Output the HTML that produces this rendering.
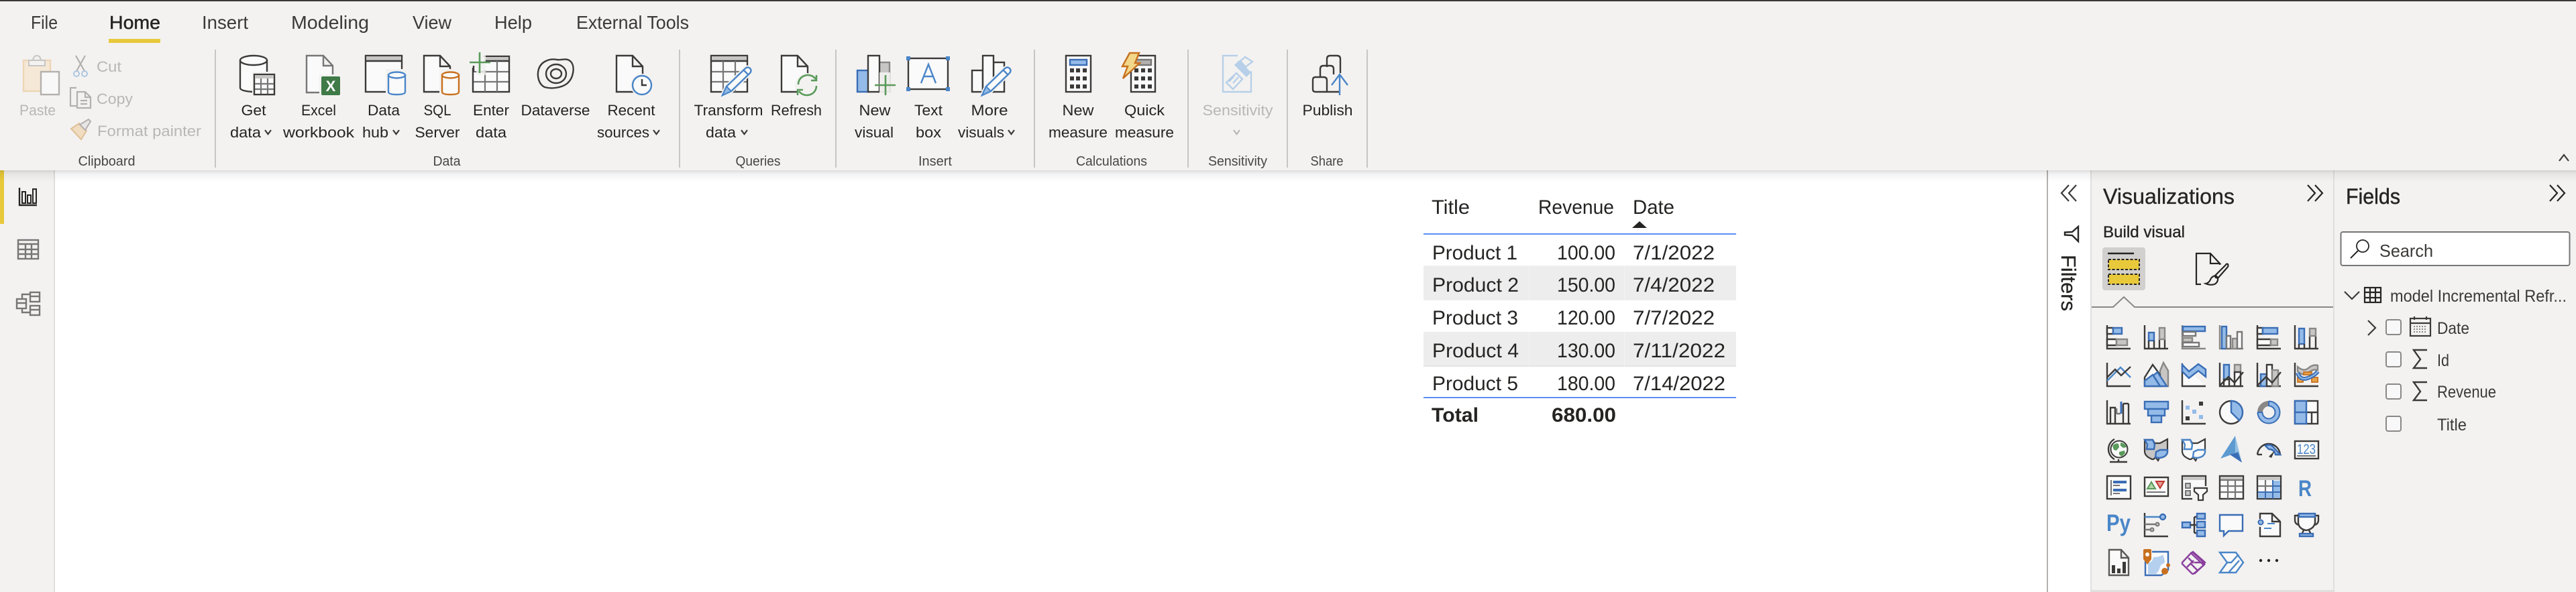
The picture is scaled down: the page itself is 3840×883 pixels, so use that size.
<!DOCTYPE html>
<html lang="en"><head><meta charset="utf-8"><title>Power BI Desktop</title>
<style>
html,body{margin:0;padding:0;background:#fff;width:3840px;height:883px;overflow:hidden}
svg{display:block;position:absolute;left:0;top:0}
text{font-family:"Liberation Sans",sans-serif;fill:#252423}
.t{font-size:28px}
.r{font-size:22.500px;text-anchor:middle}
.rs{font-size:22.500px}
.dis{fill:#b9b7b5}
.gl{font-size:20.500px;text-anchor:middle;fill:#484644}
.tb{font-size:30px}
.ra{text-anchor:end}
.k{fill:none;stroke:#3b3a39;stroke-width:2.4}
.w{fill:#fafafa;stroke:#3b3a39;stroke-width:2.4}
.w2{fill:#fafafa;stroke:#767676;stroke-width:2.4}
.ln{fill:none;stroke:#767676;stroke-width:2.2}
.b{fill:#94bbe8;stroke:#3a6db5;stroke-width:2.4}
.bl{fill:#fafafa;stroke:#4a86c8;stroke-width:2.4}
.bo{fill:none;stroke:#4a86c8;stroke-width:2.4}
.g{fill:#c8c6c4;stroke:#8a8886;stroke-width:2.4}
.hd{fill:#c8c6c4}
.sep{stroke:#c8c6c4;stroke-width:2}
.gr{fill:none;stroke:#5a9a5a;stroke-width:2.6}
.or{fill:#fafafa;stroke:#c8701e;stroke-width:2.4}
.ch{fill:none;stroke:#3b3a39;stroke-width:2.2}
.dk{fill:#3b3a39}
.pu{fill:none;stroke:#8a3f9d;stroke-width:2.4}
.ds{fill:none;stroke:#b7cfe8;stroke-width:2.4}
.dg{fill:none;stroke:#b3b0ad;stroke-width:2.2}
.cb{fill:#f8f8f8;stroke:#8a8886;stroke-width:2}
.nv{fill:none;stroke:#767676;stroke-width:2.4}
.fl{font-size:25px;fill:#3b3a39}
</style></head><body>
<svg xmlns="http://www.w3.org/2000/svg" width="3840" height="883" viewBox="0 0 3840 883">
<defs>
<linearGradient id="sh" x1="0" y1="0" x2="0" y2="1"><stop offset="0" stop-color="#000" stop-opacity=".13"/><stop offset=".3" stop-color="#000" stop-opacity=".05"/><stop offset="1" stop-color="#000" stop-opacity="0"/></linearGradient>
</defs>
<!-- panes -->
<rect width="3840" height="883" fill="#fff"/>
<rect x="0" y="254" width="81" height="629" fill="#f3f2f1"/>
<rect x="80" y="254" width="2" height="629" fill="#e1dfdd"/>
<rect x="0" y="254" width="6" height="80" fill="#e8c93b"/>
<rect x="3051" y="254" width="2" height="629" fill="#b3b0ad"/>
<rect x="3118" y="254" width="722" height="629" fill="#f3f2f1"/>
<rect x="3116" y="254" width="2" height="629" fill="#e1dfdd"/>
<rect x="3478" y="254" width="2" height="629" fill="#e1dfdd"/>
<rect x="3118" y="880" width="360" height="3" fill="#e1dfdd"/>
<!-- ribbon -->
<rect x="0" y="254" width="3840" height="18" fill="url(#sh)"/>
<rect width="3840" height="254" fill="#f3f2f1"/>
<rect width="3840" height="2" fill="#3b3a39"/>
<text class="t" x="46" y="43" textLength="40" lengthAdjust="spacingAndGlyphs" style="fill:#3b3a39">File</text>
<text class="t" x="163" y="43" textLength="76" lengthAdjust="spacingAndGlyphs" stroke="#252423" stroke-width=".5">Home</text>
<rect x="162" y="58" width="77" height="6" fill="#e8c93b"/>
<text class="t" x="301" y="43" textLength="69" lengthAdjust="spacingAndGlyphs" style="fill:#3b3a39">Insert</text>
<text class="t" x="434" y="43" textLength="116" lengthAdjust="spacingAndGlyphs" style="fill:#3b3a39">Modeling</text>
<text class="t" x="615" y="43" textLength="58" lengthAdjust="spacingAndGlyphs" style="fill:#3b3a39">View</text>
<text class="t" x="737" y="43" textLength="56" lengthAdjust="spacingAndGlyphs" style="fill:#3b3a39">Help</text>
<text class="t" x="859" y="43" textLength="168" lengthAdjust="spacingAndGlyphs" style="fill:#3b3a39">External Tools</text>
<g>
<line class="sep" x1="321" y1="74" x2="321" y2="250"/><line class="sep" x1="1013" y1="74" x2="1013" y2="250"/><line class="sep" x1="1246" y1="74" x2="1246" y2="250"/><line class="sep" x1="1542" y1="74" x2="1542" y2="250"/><line class="sep" x1="1771" y1="74" x2="1771" y2="250"/><line class="sep" x1="1919" y1="74" x2="1919" y2="250"/><line class="sep" x1="2038" y1="74" x2="2038" y2="250"/>
</g>
<!-- ribbon labels -->
<text class="r dis" x="56" y="172" textLength="54" lengthAdjust="spacingAndGlyphs">Paste</text>
<text class="rs dis" x="144" y="107" textLength="37" lengthAdjust="spacingAndGlyphs">Cut</text><text class="rs dis" x="144" y="155" textLength="54" lengthAdjust="spacingAndGlyphs">Copy</text><text class="rs dis" x="145" y="203" textLength="155" lengthAdjust="spacingAndGlyphs">Format painter</text>
<text class="r" x="378" y="172" textLength="37" lengthAdjust="spacingAndGlyphs">Get</text><text class="rs" x="343" y="205" textLength="46" lengthAdjust="spacingAndGlyphs">data</text><path class="ch" d="M395 194l4.500 6 4.500-6"/>
<text class="r" x="475" y="172" textLength="52" lengthAdjust="spacingAndGlyphs">Excel</text><text class="r" x="475" y="205" textLength="106" lengthAdjust="spacingAndGlyphs">workbook</text>
<text class="r" x="572" y="172" textLength="48" lengthAdjust="spacingAndGlyphs">Data</text><text class="rs" x="540" y="205" textLength="39" lengthAdjust="spacingAndGlyphs">hub</text><path class="ch" d="M586 194l4.500 6 4.500-6"/>
<text class="r" x="652" y="172" textLength="41" lengthAdjust="spacingAndGlyphs">SQL</text><text class="r" x="652" y="205" textLength="67" lengthAdjust="spacingAndGlyphs">Server</text>
<text class="r" x="732" y="172" textLength="54" lengthAdjust="spacingAndGlyphs">Enter</text><text class="r" x="732" y="205" textLength="46" lengthAdjust="spacingAndGlyphs">data</text>
<text class="r" x="828" y="172" textLength="103" lengthAdjust="spacingAndGlyphs">Dataverse</text>
<text class="r" x="941" y="172" textLength="71" lengthAdjust="spacingAndGlyphs">Recent</text><text class="rs" x="890" y="205" textLength="78" lengthAdjust="spacingAndGlyphs">sources</text><path class="ch" d="M974 194l4.500 6 4.500-6"/>
<text class="r" x="1086" y="172" textLength="103" lengthAdjust="spacingAndGlyphs">Transform</text><text class="rs" x="1052" y="205" textLength="45" lengthAdjust="spacingAndGlyphs">data</text><path class="ch" d="M1105 194l4.500 6 4.500-6"/>
<text class="r" x="1187" y="172" textLength="76" lengthAdjust="spacingAndGlyphs">Refresh</text>
<text class="r" x="1304" y="172" textLength="47" lengthAdjust="spacingAndGlyphs">New</text><text class="r" x="1303" y="205" textLength="58" lengthAdjust="spacingAndGlyphs">visual</text>
<text class="r" x="1384" y="172" textLength="42" lengthAdjust="spacingAndGlyphs">Text</text><text class="r" x="1384" y="205" textLength="38" lengthAdjust="spacingAndGlyphs">box</text>
<text class="r" x="1475" y="172" textLength="55" lengthAdjust="spacingAndGlyphs">More</text><text class="rs" x="1428" y="205" textLength="69" lengthAdjust="spacingAndGlyphs">visuals</text><path class="ch" d="M1503 194l4.500 6 4.500-6"/>
<text class="r" x="1607" y="172" textLength="47" lengthAdjust="spacingAndGlyphs">New</text><text class="r" x="1607" y="205" textLength="88" lengthAdjust="spacingAndGlyphs">measure</text>
<text class="r" x="1706" y="172" textLength="60" lengthAdjust="spacingAndGlyphs">Quick</text><text class="r" x="1706" y="205" textLength="88" lengthAdjust="spacingAndGlyphs">measure</text>
<text class="r dis" x="1845" y="172" textLength="105" lengthAdjust="spacingAndGlyphs">Sensitivity</text><path fill="none" stroke="#b9b7b5" stroke-width="2.2" d="M1839 194l4.500 6 4.500-6"/>
<text class="r" x="1979" y="172" textLength="75" lengthAdjust="spacingAndGlyphs">Publish</text>
<text class="gl" x="159" y="247" textLength="85" lengthAdjust="spacingAndGlyphs">Clipboard</text><text class="gl" x="666" y="247" textLength="41" lengthAdjust="spacingAndGlyphs">Data</text><text class="gl" x="1130" y="247" textLength="67" lengthAdjust="spacingAndGlyphs">Queries</text><text class="gl" x="1394" y="247" textLength="50" lengthAdjust="spacingAndGlyphs">Insert</text><text class="gl" x="1657" y="247" textLength="106" lengthAdjust="spacingAndGlyphs">Calculations</text><text class="gl" x="1845" y="247" textLength="88" lengthAdjust="spacingAndGlyphs">Sensitivity</text><text class="gl" x="1978" y="247" textLength="49" lengthAdjust="spacingAndGlyphs">Share</text>
<path d="M3815 240l7-9 7 9" fill="none" stroke="#3b3a39" stroke-width="2.2"/>

<!-- Paste -->
<rect x="35" y="90" width="40" height="46" fill="#f5e8d6" stroke="#eed5b5" stroke-width="2.4"/><rect x="43" y="90" width="24" height="8" fill="#f3f2f1" stroke="#c8c6c4" stroke-width="2"/><path d="M49 90q1-7 6-7t6 7" fill="none" stroke="#c8c6c4" stroke-width="2"/>
<rect x="61" y="107" width="27" height="34" fill="#f8f8f8" stroke="#b3b0ad" stroke-width="2.4"/>
<!-- Cut -->
<path class="dg" d="M113 83l13 23M127 83l-13 23"/><circle cx="114" cy="110" r="4" fill="none" stroke="#aec6e0" stroke-width="2"/><circle cx="126" cy="110" r="4" fill="none" stroke="#aec6e0" stroke-width="2"/>
<!-- Copy -->
<path class="dg" d="M114 131h-9v27h10M115 137h12l8 8v16h-20zM127 137v8h8M120 150h10M120 155h10"/>
<!-- Format painter -->
<path d="M106 192l12-8 11 11-8 13z" fill="#f0dcc0" stroke="#e0bf96" stroke-width="2"/><path d="M119 186l13-8 3 3-8 13z" fill="#e8e6e4" stroke="#b3b0ad" stroke-width="2"/>
<!-- Get data -->
<path class="w" d="M358 90V131q0 5 20 6h20V90z"/><ellipse class="w" cx="378" cy="90" rx="20" ry="7"/>
<rect x="376" y="107" width="36" height="37" fill="#f3f2f1"/><rect x="379" y="111" width="30" height="30" class="w"/><rect x="380" y="112" width="28" height="5" class="hd"/><path class="ln" d="M389 117v23M399 117v23M380 125h28M380 133h28" stroke-width="1.800"/>
<!-- Excel -->
<path class="w2" d="M457 83h25l14 15v40h-39zM482 83v15h14"/><rect x="476" y="111" width="34" height="34" fill="#f3f2f1"/><rect x="479" y="114" width="28" height="28" rx="2" fill="#3f7a47"/><text x="493" y="136" text-anchor="middle" font-size="22" font-weight="bold" style="fill:#fff">X</text>
<!-- Data hub -->
<rect class="w" x="545" y="83" width="54" height="54"/><rect x="546" y="84" width="52" height="7" class="hd"/><path class="k" d="M546 91h52"/><rect x="575" y="103" width="32" height="40" fill="#f3f2f1"/>
<path class="bl" d="M579 112v25q0 4 12.500 4t12.500-4v-25z"/><ellipse class="bl" cx="591.500" cy="112" rx="12.500" ry="4.500"/>
<!-- SQL -->
<path class="w" d="M632 83h24l15 16v38h-39zM656 83v16h15"/><rect x="655" y="103" width="32" height="40" fill="#f3f2f1"/>
<path class="or" d="M659 112v25q0 4 12.500 4t12.500-4v-25z"/><ellipse class="or" cx="671.500" cy="112" rx="12.500" ry="4.500"/>
<!-- Enter data -->
<rect class="w" x="705" y="84" width="54" height="53"/><rect x="722" y="85" width="36" height="6" class="hd"/><path class="k" d="M722 91h36"/><path class="ln" d="M723 104v33M741 91v46M706 107h52M706 122h52"/><rect x="697" y="82" width="24" height="19" fill="#f3f2f1"/><path class="k" d="M706 98v9"/><rect x="710" y="78" width="14" height="34" fill="#f3f2f1" opacity=".8"/><path class="gr" d="M700 93h31M715 78v31"/>
<!-- Dataverse -->
<path class="k" stroke-width="3" d="M812 130C803 126 800 113 803 103 807 91 820 87 830 89 838 90 844 86 850 91 858 98 855 116 846 124 838 131 822 133 812 130Z"/><ellipse class="k" cx="829" cy="110" rx="15" ry="14"/><ellipse class="k" cx="829" cy="110" rx="8" ry="7"/>
<!-- Recent -->
<path class="w" d="M919 83h24l15 16v38h-39zM943 83v16h15"/><circle cx="957" cy="127" r="17" fill="#f3f2f1"/><circle cx="957" cy="127" r="14" class="bl" stroke-width="2.800"/><path class="k" d="M957 118v9h7"/>
<!-- Transform -->
<rect class="w" x="1060" y="83" width="54" height="54"/><rect x="1061" y="84" width="52" height="7" class="hd"/><path class="k" d="M1061 91h52"/><path class="ln" d="M1078 91v46M1096 91v46M1061 107h52M1061 122h52"/>
<path fill="#f3f2f1" stroke="#f3f2f1" stroke-width="6" d="M1077 142l6-13 28-27q4-3 7 0t0 7l-28 27z"/>
<path class="bl" d="M1077 142l6-13 28-27q4-3 7 0t0 7l-28 27z"/><path fill="#94bbe8" stroke="#4a86c8" stroke-width="2" d="M1077 142l6-13 7 7z"/><path class="bo" d="M1108 104l7 7"/>
<!-- Refresh -->
<path class="w" d="M1165 83h24l15 16v38h-39zM1189 83v16h15"/><circle cx="1203" cy="127" r="18" fill="#f3f2f1"/><path class="gr" d="M1190 126c0-14 18-19 26-8M1217 128c0 14-18 19-26 8M1217 112v8h-8M1189 142v-8h8"/>
<!-- New visual -->
<rect class="b" x="1278" y="105" width="17" height="32"/><rect class="g" x="1310" y="93" width="16" height="44"/><rect class="w" x="1294" y="83" width="17" height="54"/><rect x="1311" y="108" width="16" height="36" fill="#f3f2f1" opacity=".9"/><path class="gr" d="M1304 127h31M1320 112v30"/>
<!-- Text box -->
<rect class="w" x="1354" y="87" width="59" height="46"/><rect x="1351" y="84" width="6" height="6" fill="#4a86c8"/><rect x="1410" y="84" width="6" height="6" fill="#4a86c8"/><rect x="1351" y="130" width="6" height="6" fill="#4a86c8"/><rect x="1410" y="130" width="6" height="6" fill="#4a86c8"/><path class="bo" d="M1373 124l11-28 11 28M1377 114h14"/>
<!-- More visuals -->
<rect class="w" x="1449" y="105" width="16" height="32"/><rect class="w" x="1481" y="93" width="16" height="44"/><rect class="w" x="1465" y="83" width="16" height="54"/>
<path fill="#f3f2f1" stroke="#f3f2f1" stroke-width="6" d="M1464 142l6-13 28-27q4-3 7 0t0 7l-28 27z"/><path class="bl" d="M1464 142l6-13 28-27q4-3 7 0t0 7l-28 27z"/><path fill="#94bbe8" stroke="#4a86c8" stroke-width="2" d="M1464 142l6-13 7 7z"/><path class="bo" d="M1495 104l7 7"/>
<!-- New measure -->
<rect class="w" x="1589" y="83" width="37" height="54"/><rect class="b" x="1595" y="89" width="25" height="8"/>
<g class="dk"><rect x="1595" y="102" width="6" height="6"/><rect x="1604" y="102" width="6" height="6"/><rect x="1614" y="102" width="6" height="6"/><rect x="1595" y="114" width="6" height="6"/><rect x="1604" y="114" width="6" height="6"/><rect x="1614" y="114" width="6" height="6"/><rect x="1595" y="126" width="6" height="6"/><rect x="1604" y="126" width="6" height="6"/><rect x="1614" y="126" width="6" height="6"/></g>
<!-- Quick measure -->
<rect class="w" x="1686" y="83" width="36" height="54"/><rect class="g" x="1692" y="89" width="24" height="8" style="fill:#b3b0ad;stroke:#767676"/>
<g class="dk"><rect x="1691" y="102" width="6" height="6"/><rect x="1701" y="102" width="6" height="6"/><rect x="1711" y="102" width="6" height="6"/><rect x="1691" y="114" width="6" height="6"/><rect x="1701" y="114" width="6" height="6"/><rect x="1711" y="114" width="6" height="6"/><rect x="1691" y="126" width="6" height="6"/><rect x="1701" y="126" width="6" height="6"/><rect x="1711" y="126" width="6" height="6"/></g>
<path fill="#f2d78a" stroke="#c8701e" stroke-width="2.400" d="M1684 79h14l-6 15h7l-25 23 7-18h-8z"/>
<!-- Sensitivity -->
<path class="ds" d="M1845 83h-22v54h42V106"/><path class="ds" d="M1843 109l9 9-14 15-10-10zM1840 113l-8 9M1846 115l-8 9"/><path fill="#b7cfe8" d="M1847 90l18 18-7 7-18-18z"/><path class="ds" d="M1856 85l-7 6 8 9 2-2 8-6z"/>
<!-- Publish -->
<path class="k" d="M1978 100V88q0-5 5-5h10q5 0 5 5v21M1968 115v-12q0-5 5-5h10q5 0 5 5v8M1978 137h-17q-4 0-4-4v-14q0-4 4-4h12q5 0 5 5v17M1978 137h19"/><path class="bo" d="M1997 112v30M1985 127l12-16 12 16"/>

<!-- Left nav -->
<path d="M29 280v26h26" fill="none" stroke="#252423" stroke-width="2.400"/><path fill="none" stroke="#252423" stroke-width="2" d="M33 286h5v17h-5zM41 291h5v12h-5zM49 282h5v21h-5z"/>
<g class="nv"><rect x="27" y="358" width="30" height="28"/><path d="M27 364h30M38 364v22M47 364v22M27 372h30M27 379h30"/></g>
<g class="nv"><rect x="25" y="446" width="14" height="14"/><path d="M25 452h14M33 446v-7h12M33 460v6h12"/><rect x="45" y="436" width="14" height="14"/><path d="M45 442h14"/><rect x="45" y="456" width="14" height="14"/><path d="M45 462h14"/></g>

<!-- Table visual -->
<text class="tb" x="2134" y="319" textLength="57" lengthAdjust="spacingAndGlyphs">Title</text><text class="tb" x="2293" y="319" textLength="113" lengthAdjust="spacingAndGlyphs">Revenue</text><text class="tb" x="2434" y="319" textLength="62" lengthAdjust="spacingAndGlyphs">Date</text>
<path d="M2433 340l11-10 11 10z" fill="#252423"/>
<rect x="2122" y="397" width="466" height="51" fill="#ededed"/><rect x="2122" y="495" width="466" height="51" fill="#ededed"/>
<rect x="2122" y="396" width="466" height="1" fill="#f3f3f3"/><rect x="2122" y="545" width="466" height="2" fill="#e4e4e4"/>
<path stroke="#f3f3f3" stroke-width="1" d="M2279.500 397v51M2421.500 397v51M2279.500 495v51M2421.500 495v51"/>
<rect x="2122" y="348" width="466" height="2" fill="#5c8ef2"/><rect x="2122" y="592" width="466" height="2" fill="#5c8ef2"/>
<g>
<text class="tb" x="2135" y="387" textLength="127" lengthAdjust="spacingAndGlyphs">Product 1</text><text class="tb ra" x="2408" y="387" textLength="87" lengthAdjust="spacingAndGlyphs">100.00</text><text class="tb" x="2434" y="387" textLength="122" lengthAdjust="spacingAndGlyphs">7/1/2022</text>
<text class="tb" x="2135" y="435" textLength="129" lengthAdjust="spacingAndGlyphs">Product 2</text><text class="tb ra" x="2408" y="435" textLength="87" lengthAdjust="spacingAndGlyphs">150.00</text><text class="tb" x="2434" y="435" textLength="122" lengthAdjust="spacingAndGlyphs">7/4/2022</text>
<text class="tb" x="2135" y="484" textLength="128" lengthAdjust="spacingAndGlyphs">Product 3</text><text class="tb ra" x="2408" y="484" textLength="87" lengthAdjust="spacingAndGlyphs">120.00</text><text class="tb" x="2434" y="484" textLength="122" lengthAdjust="spacingAndGlyphs">7/7/2022</text>
<text class="tb" x="2135" y="533" textLength="129" lengthAdjust="spacingAndGlyphs">Product 4</text><text class="tb ra" x="2408" y="533" textLength="87" lengthAdjust="spacingAndGlyphs">130.00</text><text class="tb" x="2434" y="533" textLength="138" lengthAdjust="spacingAndGlyphs">7/11/2022</text>
<text class="tb" x="2135" y="582" textLength="128" lengthAdjust="spacingAndGlyphs">Product 5</text><text class="tb ra" x="2408" y="582" textLength="87" lengthAdjust="spacingAndGlyphs">180.00</text><text class="tb" x="2434" y="582" textLength="138" lengthAdjust="spacingAndGlyphs">7/14/2022</text>
<text class="tb" x="2134" y="629" font-weight="bold" textLength="70" lengthAdjust="spacingAndGlyphs">Total</text><text class="tb ra" x="2409" y="629" font-weight="bold" textLength="96" lengthAdjust="spacingAndGlyphs">680.00</text>
</g>

<!-- Filters pane -->
<path class="ch" d="M3084 276l-11 12 11 12M3095 276l-11 12 11 12"/>
<path class="k" d="M3098 338v22l-9-9-11-.5v-4l11-.5z" style="stroke:#252423"/>
<text transform="translate(3073,380) rotate(90)" font-size="31" textLength="84" lengthAdjust="spacingAndGlyphs" stroke="#252423" stroke-width=".3">Filters</text>

<!-- Visualizations -->
<text x="3135" y="304" font-size="32" textLength="196" lengthAdjust="spacingAndGlyphs" stroke="#252423" stroke-width=".35">Visualizations</text>
<path class="ch" d="M3440 276l11 12-11 12M3451 276l11 12-11 12" style="stroke:#252423"/>
<text x="3135" y="354" font-size="24" textLength="122" lengthAdjust="spacingAndGlyphs" stroke="#252423" stroke-width=".35">Build visual</text>
<rect x="3134" y="369" width="64" height="64" rx="4" fill="#d2d0ce"/>
<path stroke="#252423" stroke-width="2.400" d="M3142 378h39"/>
<rect x="3143" y="387" width="46" height="15" fill="#e8c93b" stroke="#252423" stroke-width="2" stroke-dasharray="4 2.500"/><rect x="3143" y="409" width="46" height="15" fill="#e8c93b" stroke="#252423" stroke-width="2" stroke-dasharray="4 2.500"/>
<path fill="none" stroke="#252423" stroke-width="2.200" d="M3281 424h-7v-46h21l14 15h-14v-15M3309 393v2"/>
<path fill="#f3f2f1" stroke="#252423" stroke-width="2.200" d="M3321 394q-2-1-3 1l-15 15q-2 2 0 4 2 1 4 0l14-16q1-2 0-4zM3303 411q-6 1-8 6-2 5-7 6 7 3 13 1 6-3 5-10z"/>
<path fill="none" stroke="#8a8886" stroke-width="2" d="M3118 458h32l16-15 16 15h296"/>

<!-- Grid Row 1 -->
<g transform="translate(3140,485)"><path class="k" d="M1 0v35h35"/><path class="w" d="M1 4h9v9H1z"/><rect class="b" x="10" y="4" width="13" height="9"/><path class="w" d="M1 21h14v9H1z"/><rect class="g" x="15" y="21" width="16" height="9"/></g>
<g transform="translate(3196,485)"><path class="k" d="M1 0v35h35"/><rect class="b" x="7" y="11" width="8" height="12"/><path class="k" d="M7 23v12M15 23v12M23 21v14M31 21v14"/><rect class="g" x="23" y="4" width="8" height="17"/></g>
<g transform="translate(3252,485)"><path fill="none" stroke="#8a8886" stroke-width="2.400" d="M1 0v35h35"/><rect class="b" x="2" y="2" width="33" height="7"/><rect class="w2" x="2" y="10" width="19" height="6"/><rect class="g" x="2" y="19" width="14" height="6"/><rect class="w2" x="2" y="26" width="24" height="6"/></g>
<g transform="translate(3308,485)"><path fill="none" stroke="#8a8886" stroke-width="2.400" d="M1 0v35h35"/><rect class="b" x="4" y="2" width="7" height="33"/><rect class="w2" x="11" y="16" width="6" height="19"/><rect class="g" x="20" y="20" width="7" height="15"/><rect class="w2" x="27" y="10" width="7" height="25"/></g>
<g transform="translate(3364,485)"><path class="k" d="M1 0v35h35"/><path class="w" d="M1 4h8v9H1z"/><rect class="b" x="9" y="4" width="22" height="9"/><path class="w" d="M1 21h20v9H1z"/><rect class="g" x="21" y="21" width="10" height="9"/></g>
<g transform="translate(3420,485)"><path class="k" d="M1 0v35h35"/><rect class="b" x="7" y="5" width="8" height="23"/><path class="k" d="M7 28v7M15 28v7M23 16v19M32 16v19"/><rect class="g" x="23" y="5" width="9" height="11"/></g>
<!-- Row 2 -->
<g transform="translate(3140,541)"><path class="k" d="M1 0v35h35"/><path class="bo" d="M1 27L21 7l15 15"/><path class="k" d="M1 22L13 10l9 9L36 6"/></g>
<g transform="translate(3196,541)"><path d="M24 12l5-12 7 12v23H24z" class="g"/><path class="w" d="M1 22L13 3l11 15v17H1z"/><path class="b" d="M1 35v-8l12-9 11 17z"/><path class="b" d="M14 19l6-5 14 21H24z"/></g>
<g transform="translate(3252,541)"><path fill="#fafafa" stroke="#3b3a39" stroke-width="2.400" d="M1 1v34h35"/><path class="b" d="M1 3l10 10 14-11 11 8v11l-11-9-14 11-10-10z"/></g>
<g transform="translate(3308,541)"><path class="k" d="M1 0v35h35"/><rect class="b" x="7" y="3" width="8" height="22"/><rect class="w" x="7" y="25" width="8" height="10"/><rect class="g" x="23" y="3" width="9" height="11"/><rect class="w" x="23" y="14" width="9" height="21"/><path class="k" d="M1 34l13-13 9 9L36 14"/></g>
<g transform="translate(3364,541)"><path class="k" d="M1 0v35h35"/><rect class="b" x="6" y="17" width="9" height="18"/><rect class="w" x="15" y="3" width="8" height="32"/><rect class="g" x="23" y="11" width="9" height="24"/><path class="k" d="M1 34l13-13 9 9L36 14"/></g>
<g transform="translate(3420,541)"><path class="k" d="M1 0v35h35"/><path d="M5 6q9 8 16 2t14-4v7q-7-2-14 4T5 13z" class="g"/><path d="M5 22h8v7H5zM26 22h9v7h-9zM14 14h12v4H14z" fill="#e8a349" stroke="#c8701e" stroke-width="1.800"/><path d="M5 15q4 12 15 8t15-10" fill="none" stroke="#3a6db5" stroke-width="6"/><path d="M5 15q4 12 15 8t15-10" fill="none" stroke="#94bbe8" stroke-width="2"/></g>
<!-- Row 3 -->
<g transform="translate(3140,597)"><path class="k" d="M1 0v35h35"/><path class="k" d="M6 35V11h7v24M25 5v30M33 5v30M25 5h8"/><path stroke="#767676" stroke-width="2.600" fill="none" d="M15 20v-8M15 20h6"/><path stroke="#3a6db5" stroke-width="3" fill="none" d="M22 20V2"/></g>
<g transform="translate(3196,597)"><rect class="b" x="1" y="2" width="35" height="11"/><rect class="b" x="6" y="13" width="25" height="10"/><rect class="b" x="11" y="23" width="15" height="10"/></g>
<g transform="translate(3252,597)"><path class="k" d="M1 0v35h35"/><rect x="6" y="8" width="6" height="6" fill="#94bbe8"/><rect x="16" y="14" width="6" height="6" fill="#94bbe8"/><rect x="26" y="2" width="6" height="6" fill="#3b3a39"/><rect x="6" y="24" width="6" height="6" fill="#3b3a39"/><rect x="26" y="22" width="6" height="6" fill="#94bbe8"/></g>
<g transform="translate(3308,597)"><circle class="w" cx="18" cy="18" r="17"/><path class="b" d="M18 1a17 17 0 0 1 12 29L18 18z"/></g>
<g transform="translate(3364,597)"><circle cx="18" cy="18" r="13" fill="none" stroke="#8a8886" stroke-width="8"/><path d="M18 5a13 13 0 1 1-13 13" fill="none" stroke="#3a6db5" stroke-width="9"/><path d="M18 5a13 13 0 1 1-13 13" fill="none" stroke="#94bbe8" stroke-width="5"/><path stroke="#3a6db5" stroke-width="2" d="M18 1v8M1 18h8"/></g>
<g transform="translate(3420,597)"><rect class="w" x="1" y="1" width="34" height="34"/><path class="k" d="M18 18h17M26 18v17"/><rect class="b" x="1" y="1" width="17" height="17"/><rect class="b" x="1" y="18" width="17" height="17"/></g>
<!-- Row 4 -->
<g transform="translate(3140,653)"><path class="k" d="M12 2A17 17 0 0 0 12 32M5 36h26M18 32v4"/><circle cx="19" cy="17" r="12.500" fill="#fafafa" stroke="#3b3a39" stroke-width="2"/><path fill="#5a9a5a" d="M9 12q5-5 9-3l1 5-4 5-4-1zM21 7q7 1 9 7l-5 1-4-3zM19 21l8-2 1 4-5 5-4-3z"/></g>
<g transform="translate(3196,653)"><path fill="#c8c6c4" stroke="#3b3a39" stroke-width="2.200" d="M1 3h12l3 5h8l11-6v20q-2 7-12 8l-2 4-4-5q-3 5-7 2Q1 27 1 20z"/><path class="b" d="M1 3h12l3 7-1 7H4l1-7z"/><path class="b" d="M18 21l6-3h11v4q-2 7-12 8l-6-1z"/></g>
<g transform="translate(3252,653)"><path fill="#fafafa" stroke="#3b3a39" stroke-width="2.200" d="M1 3h12l3 5h8l11-6v20q-2 7-12 8l-2 4-4-5q-3 5-7 2Q1 27 1 20z"/><path class="bl" d="M1 3h12l3 7-1 7H4l1-7z" style="fill:none"/><path class="bl" d="M18 21l6-3h11v4q-2 7-12 8l-6-1z" style="fill:none"/></g>
<g transform="translate(3310,650)"><path fill="#5d9ad0" d="M0 34L22 0v26z"/><path fill="#94c0e4" d="M22 0l10 40-10-14z"/><path fill="#3a6db5" d="M22 26l-8 2 18 12-6-16z"/></g>
<g transform="translate(3364,661)"><path class="k" d="M1 17C2 8 9 1 18 1s16 7 17 16h-7"/><path class="k" d="M1 17h7"/><path class="b" d="M13 4q5-3 10 0l12 13h-7q-2-8-10-8z"/><path d="M18 20l9-9-5 11z" fill="#3b3a39"/></g>
<g transform="translate(3420,657)"><rect class="w" x="1" y="1" width="35" height="26"/><text x="4" y="20" font-size="21" textLength="28" lengthAdjust="spacingAndGlyphs" style="fill:#4a86c8">123</text><rect x="4" y="22" width="28" height="2" fill="#767676"/></g>
<!-- Row 5 -->
<g transform="translate(3140,709)"><rect class="w" x="1" y="1" width="35" height="34"/><path d="M7 7v23" stroke="#767676" stroke-width="2"/><rect x="10" y="8" width="20" height="4" fill="#3a6db5"/><rect x="10" y="14" width="10" height="2" fill="#767676"/><rect x="10" y="20" width="20" height="4" fill="#3a6db5"/><rect x="10" y="26" width="10" height="2" fill="#767676"/></g>
<g transform="translate(3196,711)"><rect class="w" x="1" y="1" width="35" height="28"/><path d="M5 18l6-10 6 10z" fill="#b7d6a8" stroke="#5a9a5a" stroke-width="2"/><path d="M18 7h12l-6 10z" fill="#e59a9a" stroke="#c0392b" stroke-width="2"/><rect x="4" y="22" width="28" height="2" fill="#767676"/></g>
<g transform="translate(3252,709)"><rect class="w" x="1" y="1" width="35" height="34"/><rect x="2" y="2" width="33" height="5" fill="#c8c6c4"/><rect x="6" y="12" width="7" height="7" fill="#c8c6c4" stroke="#767676" stroke-width="2"/><rect x="6" y="23" width="7" height="7" fill="#c8c6c4" stroke="#767676" stroke-width="2"/><rect x="16" y="16" width="23" height="22" fill="#f3f2f1"/><path d="M19 19h19v5l-6 5v8h-7v-8l-6-5z" fill="#fafafa" stroke="#3b3a39" stroke-width="2.200"/></g>
<g transform="translate(3308,709)"><rect class="w" x="1" y="1" width="35" height="34"/><rect x="2" y="2" width="33" height="5" fill="#c8c6c4"/><path class="ln" d="M2 7h33M2 16h33M2 25h33M13 7v28M24 7v28"/></g>
<g transform="translate(3364,709)"><rect class="w" x="1" y="1" width="35" height="34"/><rect x="2" y="2" width="33" height="5" fill="#c8c6c4"/><rect x="24" y="8" width="11" height="26" fill="#94bbe8"/><rect x="2" y="25" width="33" height="9" fill="#94bbe8"/><path class="ln" d="M2 16h22M13 7v18"/><path d="M2 25h33M24 7v28M24 16h11M13 25v10" stroke="#3a6db5" stroke-width="2" fill="none"/></g>
<text x="3426" y="740" font-size="34" font-weight="bold" textLength="20" lengthAdjust="spacingAndGlyphs" style="fill:#4a86c8">R</text>
<!-- Row 6 -->
<text x="3140" y="792" font-size="35" font-weight="bold" textLength="36" lengthAdjust="spacingAndGlyphs" style="fill:#4a86c8">Py</text>
<g transform="translate(3196,765)"><path class="k" d="M1 0v35h35"/><path d="M1 6h23" stroke="#4a86c8" stroke-width="2.400"/><circle cx="28" cy="6" r="4" class="b"/><path d="M1 17h17M1 25h9" stroke="#767676" stroke-width="2.400"/><circle cx="20" cy="17" r="2.500" fill="#c8c6c4" stroke="#767676" stroke-width="2"/><circle cx="12" cy="25" r="2.500" fill="#c8c6c4" stroke="#767676" stroke-width="2"/></g>
<g transform="translate(3252,765)"><rect class="b" x="1" y="14" width="12" height="8"/><path class="k" d="M13 18h6M19 6h4M19 18h4M19 30h4M19 6v24"/><rect class="b" x="23" y="1" width="12" height="8"/><rect class="b" x="23" y="13" width="12" height="9"/><rect class="b" x="23" y="26" width="12" height="9"/></g>
<g transform="translate(3308,765)"><path fill="#fafafa" stroke="#3a6db5" stroke-width="2.400" d="M1 3h34v24H14l-7 7v-7H1z"/></g>
<g transform="translate(3364,765)"><path class="w" d="M5 1h18l12 12v22H5zM23 1v12h12"/><circle cx="6" cy="15" r="6" fill="#f3f2f1"/><circle cx="6" cy="14" r="3.500" fill="#94bbe8" stroke="#3a6db5" stroke-width="2"/><path d="M16 16h11M11 23h11" stroke="#4a86c8" stroke-width="2"/></g>
<g transform="translate(3420,765)"><path class="k" d="M5 4H1v7q0 5 5 7M31 4h5v7q0 5-5 7"/><path class="w" d="M6 3v12q1 9 12 11 11-2 13-11V3z"/><path class="k" d="M14 26l-3 6M22 26l3 6"/><rect class="b" x="7" y="1" width="24" height="5"/><rect class="b" x="8" y="31" width="20" height="4"/></g>
<!-- Row 7 -->
<g transform="translate(3143,819)"><path class="w" d="M1 1h18l11 12v26H1zM19 1v12h11" style="stroke:#595856"/><rect x="5" y="24" width="5" height="12" fill="#3b3a39"/><rect x="13" y="29" width="5" height="7" fill="#3b3a39"/><rect x="21" y="19" width="5" height="17" fill="#3b3a39"/></g>
<g transform="translate(3194,819)"><path d="M14 4h24v27l-10 8H4V18" fill="#fafafa" stroke="#3a6db5" stroke-width="2.400"/><path d="M16 12q10 0 14-4 3 7 3 12l-6 4-3 8-4 5H8V20q6 1 8-8z" fill="#b5d0ee"/><path d="M1 2q0-2 2-2h8q2 0 2 2v13l-6 8-6-8z" fill="#c8701e"/><circle cx="7" cy="8" r="3" fill="#fff"/><circle cx="38" cy="24" r="3" fill="#c8701e"/><circle cx="33" cy="33" r="5" fill="#c8701e"/></g>
<g transform="translate(3252,821)"><path class="pu" d="M1 18L14 4q2-2 4 0l15 14q2 2 0 4L19 34q-2 2-4 0L1 20z"/><path class="pu" d="M14 4l3-2 16 14 2 2-3 3L14 4M18 19l-8-8M8 25l10-10M19 18L33 18"/><path class="pu" d="M18 34l2 0 15-14M14 20l10 10"/></g>
<g transform="translate(3308,823)"><path d="M1 1h24l11 15-11 15H1l11-15z" fill="#fafafa" stroke="#4a86c8" stroke-width="2.400"/><path d="M12 16h6L29 4M14 31L30 13" fill="none" stroke="#4a86c8" stroke-width="2.400"/></g>
<circle cx="3370" cy="836" r="2.200" fill="#252423"/><circle cx="3382" cy="836" r="2.200" fill="#252423"/><circle cx="3394" cy="836" r="2.200" fill="#252423"/>

<!-- Fields -->
<text x="3497" y="304" font-size="32" textLength="81" lengthAdjust="spacingAndGlyphs" stroke="#252423" stroke-width=".45">Fields</text>
<path class="ch" d="M3801 281l11 12-11 12M3812 281l11 12-11 12" style="stroke:#252423" transform="translate(0,-5)"/>
<rect x="3489.500" y="346" width="341" height="50" rx="3" fill="#fff" stroke="#767676" stroke-width="2"/>
<circle cx="3522" cy="367" r="9" fill="none" stroke="#252423" stroke-width="1.800"/><path d="M3515 374l-11 11" stroke="#252423" stroke-width="2"/>
<text x="3547" y="383" font-size="26" textLength="80" lengthAdjust="spacingAndGlyphs" style="fill:#3b3a39">Search</text>
<path class="ch" d="M3495 435l11 11 11-11" stroke-width="1.800"/>
<g fill="none" stroke="#252423" stroke-width="2.200"><rect x="3525" y="429" width="24" height="22"/><path d="M3525 436h24M3525 444h24M3533 429v22M3541 429v22"/></g>
<text class="fl" x="3563" y="450" textLength="263" lengthAdjust="spacingAndGlyphs">model Incremental Refr...</text>
<path class="ch" d="M3530 478l11 11-11 11" stroke-width="1.800"/>
<rect class="cb" x="3557" y="477" width="22" height="22" rx="3"/><rect class="cb" x="3557" y="525" width="22" height="22" rx="3"/><rect class="cb" x="3557" y="573" width="22" height="22" rx="3"/><rect class="cb" x="3557" y="621" width="22" height="22" rx="3"/>
<g fill="none" stroke="#3b3a39" stroke-width="2.200"><rect x="3593" y="475" width="30" height="26"/><path d="M3593 482h30M3599 472v5M3617 472v5"/></g>
<path d="M3598 487h20M3598 491h20M3598 495h20" stroke="#8a8886" stroke-width="2" stroke-dasharray="2 2"/>
<path class="k" d="M3618 522h-20l10 14-10 13h20"/><path class="k" d="M3618 570h-20l10 14-10 13h20"/>
<text class="fl" x="3633" y="498" textLength="48" lengthAdjust="spacingAndGlyphs">Date</text><text class="fl" x="3633" y="546" textLength="18" lengthAdjust="spacingAndGlyphs">Id</text><text class="fl" x="3633" y="593" textLength="88" lengthAdjust="spacingAndGlyphs">Revenue</text><text class="fl" x="3633" y="642" textLength="44" lengthAdjust="spacingAndGlyphs">Title</text>
</svg>
</body></html>
